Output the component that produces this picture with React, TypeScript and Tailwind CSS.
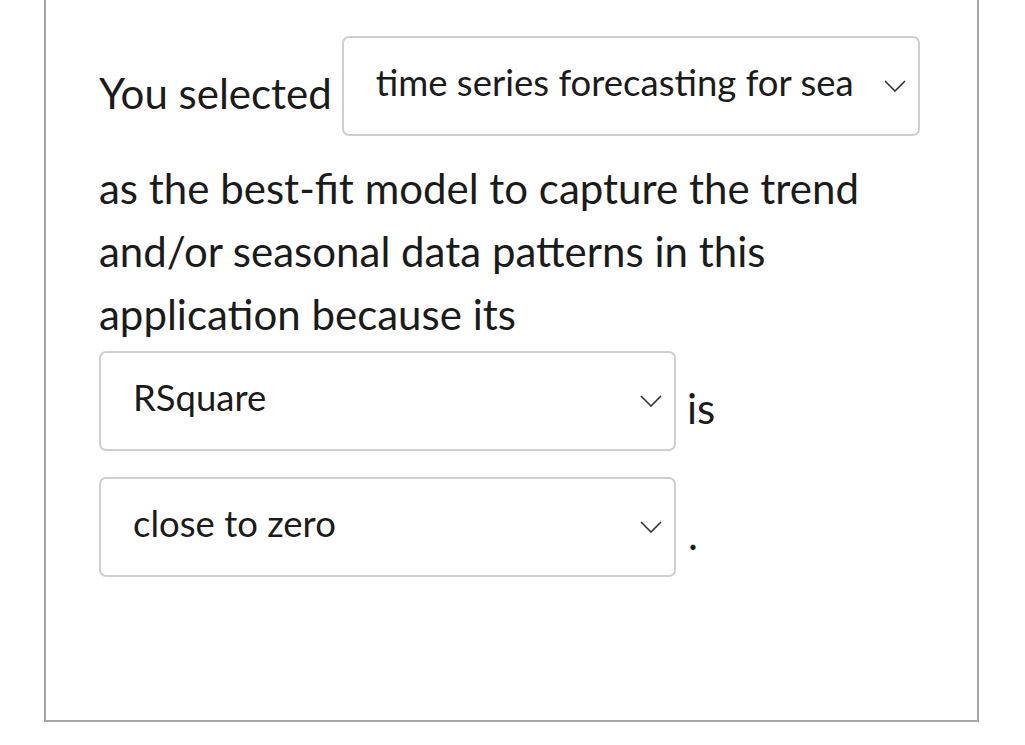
import React from "react";

function Chevron() {
  return (
    <svg width="22" height="12" viewBox="0 0 22 12" fill="none" className="shrink-0">
      <polyline points="1,1 11,11 21,1" stroke="#333" strokeWidth="1.6" />
    </svg>
  );
}

function FakeSelect({ value, className, textClass }: { value: string; className: string; textClass: string }) {
  return (
    <div
      className={`flex h-[100px] shrink-0 items-center rounded-[7px] border-2 border-[#cfcfcf] bg-white ${className}`}
    >
      <div className={`min-w-0 flex-1 overflow-hidden whitespace-nowrap text-[36.5px] leading-[1.5] mb-[8px] ${textClass}`}>
        {value}
      </div>
      <Chevron />
    </div>
  );
}

export default function App() {
  return (
    <div className="h-[745px] w-full bg-white text-[#1b1b1b]" style={{ fontFamily: "Lato, 'Noto Sans', sans-serif" }}>
      <div className="ml-[44px] h-[722px] w-[935px] border-2 border-t-0 border-[#a6a6a6] pl-[53px]">
        <div className="flex items-start pt-[36px]">
          <span className="mt-[26px] whitespace-nowrap text-[42px] leading-[63px]">You selected</span>
          <FakeSelect
            value="time series forecasting for sea"
            className="ml-[10px] w-[578px] pl-[32px] pr-[12px]"
            textClass="mr-[20px]"
          />
        </div>
        <p className="mt-[21px] w-[800px] text-[42px] leading-[63px]">
          as the best-fit model to capture the trend and/or seasonal data patterns in this application because its
        </p>
        <div className="mt-[5px] flex items-start">
          <FakeSelect value="RSquare" className="w-[577px] pl-[32px] pr-[12px]" textClass="" />
          <span className="ml-[11px] mt-[26px] text-[42px] leading-[63px]">is</span>
        </div>
        <div className="mt-[26px] flex items-start">
          <FakeSelect value="close to zero" className="w-[577px] pl-[32px] pr-[12px]" textClass="" />
          <span className="ml-[12px] mt-[26px] text-[42px] leading-[63px]">.</span>
        </div>
      </div>
    </div>
  );
}
